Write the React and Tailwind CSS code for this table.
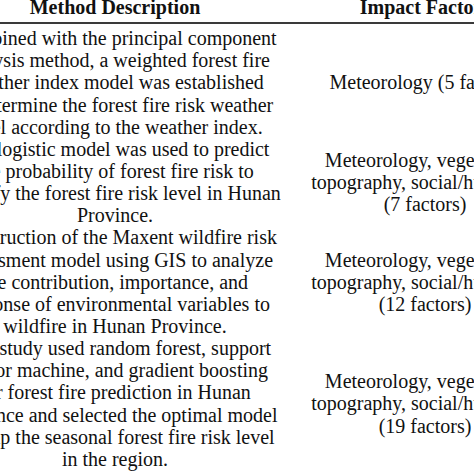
import React from 'react';

const rows = [
  {
    method: [
      'Combined with the principal component',
      'analysis method, a weighted forest fire',
      'weather index model was established',
      'to determine the forest fire risk weather',
      'level according to the weather index.',
    ],
    factors: ['Meteorology (5 factors)'],
  },
  {
    method: [
      'The logistic model was used to predict',
      'the probability of forest fire risk to',
      'classify the forest fire risk level in Hunan',
      'Province.',
    ],
    factors: ['Meteorology, vegetation,', 'topography, social/humanity', '(7 factors)'],
  },
  {
    method: [
      'Construction of the Maxent wildfire risk',
      'assessment model using GIS to analyze',
      'the contribution, importance, and',
      'response of environmental variables to',
      'wildfire in Hunan Province.',
    ],
    factors: ['Meteorology, vegetation,', 'topography, social/humanity', '(12 factors)'],
  },
  {
    method: [
      'This study used random forest, support',
      'vector machine, and gradient boosting',
      'for forest fire prediction in Hunan',
      'Province and selected the optimal model',
      'to map the seasonal forest fire risk level',
      'in the region.',
    ],
    factors: ['Meteorology, vegetation,', 'topography, social/humanity', '(19 factors)'],
  },
];

// one centred line; flex keeps it centred even when it is wider than the cell
function Line({ children }) {
  return (
    <div className="flex justify-center h-[22.15px]">
      <span className="whitespace-nowrap">{children}</span>
    </div>
  );
}

export default function App() {
  return (
    <div className="w-[474px] h-[474px] overflow-hidden bg-white">
      <div
        className="w-[620px] -mt-[4.5px] text-[20px] leading-[22.15px] text-[#111111]"
        style={{ fontFamily: '"Liberation Serif", "Times New Roman", serif' }}
      >
        <div className="grid grid-cols-[230px_390px] font-bold">
          <Line>Method Description</Line>
          <Line>Impact Factors</Line>
        </div>
        <div className="mt-[4.5px] h-[1.5px] bg-[#3a3a3a]" />
        <div className="mt-[3.5px]">
          {rows.map((row, i) => (
            <div key={i} className="grid grid-cols-[230px_390px]">
              <div>
                {row.method.map((l, j) => (
                  <Line key={j}>{l}</Line>
                ))}
              </div>
              <div className="flex flex-col justify-center">
                {row.factors.map((l, j) => (
                  <Line key={j}>{l}</Line>
                ))}
              </div>
            </div>
          ))}
        </div>
      </div>
    </div>
  );
}
